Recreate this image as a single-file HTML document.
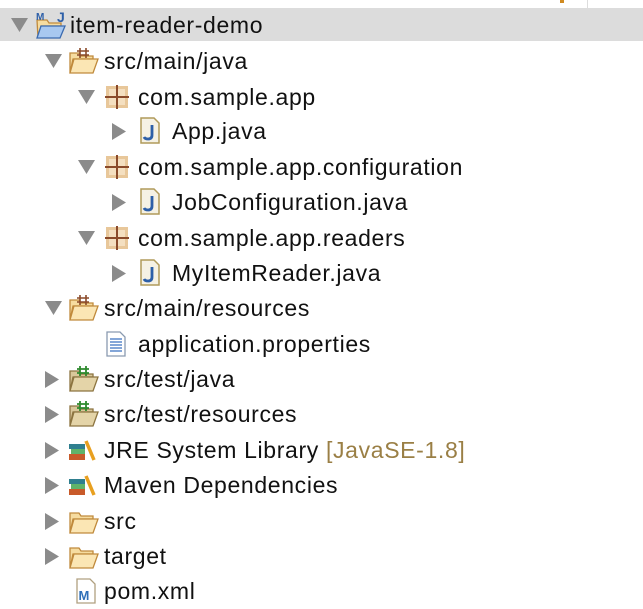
<!DOCTYPE html>
<html><head><meta charset="utf-8"><style>
body{margin:0;width:643px;height:608px;background:#fff;position:relative;overflow:hidden;font-family:"Liberation Sans",sans-serif;}
.r{position:absolute;left:0;height:35px;width:643px;}
.r span{position:absolute;top:3px;font-size:23px;letter-spacing:0.65px;line-height:28px;color:#111;white-space:nowrap}
.r svg{position:absolute}
.a{top:10px}
.i{top:5px}
</style></head><body>
<svg width="0" height="0" style="position:absolute">
<defs>
<polygon id="dn" points="0,0 17,0 8.5,14" fill="#8b8b8b"/>
<polygon id="rt" points="0,0 14,8.5 0,17" fill="#8b8b8b"/>
<g id="of">
 <path d="M2,6 h9 l2,3 h12 v3 h-20 l-3,14 z" fill="#f6dca0" stroke="#c08a3c" stroke-width="1.3"/>
 <path d="M6,12 h24 l-5,14 h-23 z" fill="#fbe6b4" stroke="#c08a3c" stroke-width="1.3"/>
</g>
<g id="pk">
 <rect x="1" y="1" width="22" height="22" fill="#e8c79a"/>
 <rect x="4" y="4" width="16" height="16" fill="#f4dfc0"/>
 <path d="M12,0 v24 M0,12 h24" stroke="#8a4a2a" stroke-width="2"/>
</g>
<g id="sf">
 <use href="#of"/>
 <path d="M12,1 v10 M18,1 v10 M9,4 h12 M9,8 h12" stroke="#8a4a2a" stroke-width="1.6"/>
</g>
<g id="tf">
 <path d="M2,6 h9 l2,3 h12 v3 h-20 l-3,14 z" fill="#d9c79a" stroke="#8c7440" stroke-width="1.3"/>
 <path d="M6,12 h24 l-5,14 h-23 z" fill="#e4d4a8" stroke="#8c7440" stroke-width="1.3"/>
 <path d="M12,1 v10 M18,1 v10 M9,4 h12 M9,8 h12" stroke="#2e8a2e" stroke-width="1.8"/>
</g>
<g id="jf">
 <path d="M3,1 h13 l5,5 v20 h-18 z" fill="#f5f1e4" stroke="#b09a5a" stroke-width="1.5"/>
 <path d="M14,8 v10 q0,4 -4,4 q-3,0 -4,-2" fill="none" stroke="#2d5fa8" stroke-width="2.8"/>
</g>
<g id="lb">
 <rect x="1" y="6" width="16" height="5" fill="#2f7f8f"/>
 <rect x="3" y="11" width="14" height="5" fill="#5fb36a"/>
 <rect x="1" y="16" width="16" height="6" fill="#c85a2a"/>
 <path d="M18,3 l8,19" stroke="#e8a020" stroke-width="3.5"/>
</g>
<g id="pf">
 <path d="M3,1 h13 l5,5 v19 h-18 z" fill="#fff" stroke="#8a9ab0" stroke-width="1.3"/>
 <path d="M6,8 h12 M6,11 h12 M6,14 h12 M6,17 h12 M6,20 h12" stroke="#3a70c0" stroke-width="1.3"/>
</g>
<g id="mf">
 <path d="M3,1 h13 l5,5 v19 h-18 z" fill="#fff" stroke="#b0a080" stroke-width="1.3"/>
 <text x="4.5" y="22" font-family="Liberation Sans" font-weight="bold" font-size="13" fill="#3070b8">M</text>
</g>
</defs></svg>

<div style="position:absolute;left:587px;top:0;width:1px;height:8px;background:#ddd"></div>
<div style="position:absolute;left:560px;top:0;width:4px;height:3px;background:#d08a20"></div>
<div style="position:absolute;left:0;top:8px;width:643px;height:33px;background:#dcdcdc"></div>

<div class="r" style="top:8px">
 <svg class="a" style="left:11px;top:10px" width="17" height="14"><use href="#dn"/></svg>
 <svg class="i" style="left:35px;top:0" width="34" height="32">
  <path d="M2,12 h10 l2,3 h12 v3 h-20 l-3,12 z" fill="#f6dca0" stroke="#c08a3c" stroke-width="1.3"/>
  <path d="M6,18 h24 l-5,12 h-23 z" fill="#a8c8f0" stroke="#3a6ab0" stroke-width="1.3"/>
  <text x="1" y="12" font-family="Liberation Sans" font-weight="bold" font-size="10" fill="#2d5fa8">M</text>
  <text x="22" y="14" font-family="Liberation Sans" font-weight="bold" font-size="14" fill="#2d5fa8">J</text>
 </svg>
 <span style="left:70px;top:3px">item-reader-demo</span>
</div>

<div class="r" style="top:44px"><svg class="a" style="left:45px" width="17" height="14"><use href="#dn"/></svg><svg class="i" style="left:68px;top:3px" width="32" height="28"><use href="#sf"/></svg><span style="left:104px">src/main/java</span></div>
<div class="r" style="top:80px"><svg class="a" style="left:78px" width="17" height="14"><use href="#dn"/></svg><svg class="i" style="left:105px;top:5px" width="24" height="24"><use href="#pk"/></svg><span style="left:138px">com.sample.app</span></div>
<div class="r" style="top:114px"><svg class="a" style="left:112px;top:9px" width="14" height="17"><use href="#rt"/></svg><svg class="i" style="left:138px;top:3px" width="24" height="28"><use href="#jf"/></svg><span style="left:172px">App.java</span></div>
<div class="r" style="top:150px"><svg class="a" style="left:78px" width="17" height="14"><use href="#dn"/></svg><svg class="i" style="left:105px;top:5px" width="24" height="24"><use href="#pk"/></svg><span style="left:138px">com.sample.app.configuration</span></div>
<div class="r" style="top:185px"><svg class="a" style="left:112px;top:9px" width="14" height="17"><use href="#rt"/></svg><svg class="i" style="left:138px;top:3px" width="24" height="28"><use href="#jf"/></svg><span style="left:172px">JobConfiguration.java</span></div>
<div class="r" style="top:221px"><svg class="a" style="left:78px" width="17" height="14"><use href="#dn"/></svg><svg class="i" style="left:105px;top:5px" width="24" height="24"><use href="#pk"/></svg><span style="left:138px">com.sample.app.readers</span></div>
<div class="r" style="top:256px"><svg class="a" style="left:112px;top:9px" width="14" height="17"><use href="#rt"/></svg><svg class="i" style="left:138px;top:3px" width="24" height="28"><use href="#jf"/></svg><span style="left:172px">MyItemReader.java</span></div>
<div class="r" style="top:291px"><svg class="a" style="left:45px" width="17" height="14"><use href="#dn"/></svg><svg class="i" style="left:68px;top:3px" width="32" height="28"><use href="#sf"/></svg><span style="left:104px">src/main/resources</span></div>
<div class="r" style="top:327px"><svg class="i" style="left:104px;top:4px" width="24" height="27"><use href="#pf"/></svg><span style="left:138px">application.properties</span></div>
<div class="r" style="top:362px"><svg class="a" style="left:45px;top:9px" width="14" height="17"><use href="#rt"/></svg><svg class="i" style="left:68px;top:3px" width="32" height="28"><use href="#tf"/></svg><span style="left:104px">src/test/java</span></div>
<div class="r" style="top:397px"><svg class="a" style="left:45px;top:9px" width="14" height="17"><use href="#rt"/></svg><svg class="i" style="left:68px;top:3px" width="32" height="28"><use href="#tf"/></svg><span style="left:104px">src/test/resources</span></div>
<div class="r" style="top:433px"><svg class="a" style="left:45px;top:9px" width="14" height="17"><use href="#rt"/></svg><svg class="i" style="left:68px;top:5px" width="28" height="26"><use href="#lb"/></svg><span style="left:104px">JRE System Library <span style="position:static;color:#9a7f45">[JavaSE-1.8]</span></span></div>
<div class="r" style="top:468px"><svg class="a" style="left:45px;top:9px" width="14" height="17"><use href="#rt"/></svg><svg class="i" style="left:68px;top:5px" width="28" height="26"><use href="#lb"/></svg><span style="left:104px">Maven Dependencies</span></div>
<div class="r" style="top:504px"><svg class="a" style="left:45px;top:9px" width="14" height="17"><use href="#rt"/></svg><svg class="i" style="left:68px;top:3px" width="32" height="28"><use href="#of"/></svg><span style="left:104px">src</span></div>
<div class="r" style="top:539px"><svg class="a" style="left:45px;top:9px" width="14" height="17"><use href="#rt"/></svg><svg class="i" style="left:68px;top:3px" width="32" height="28"><use href="#of"/></svg><span style="left:104px">target</span></div>
<div class="r" style="top:574px"><svg class="i" style="left:74px;top:4px" width="24" height="27"><use href="#mf"/></svg><span style="left:104px">pom.xml</span></div>
</body></html>
